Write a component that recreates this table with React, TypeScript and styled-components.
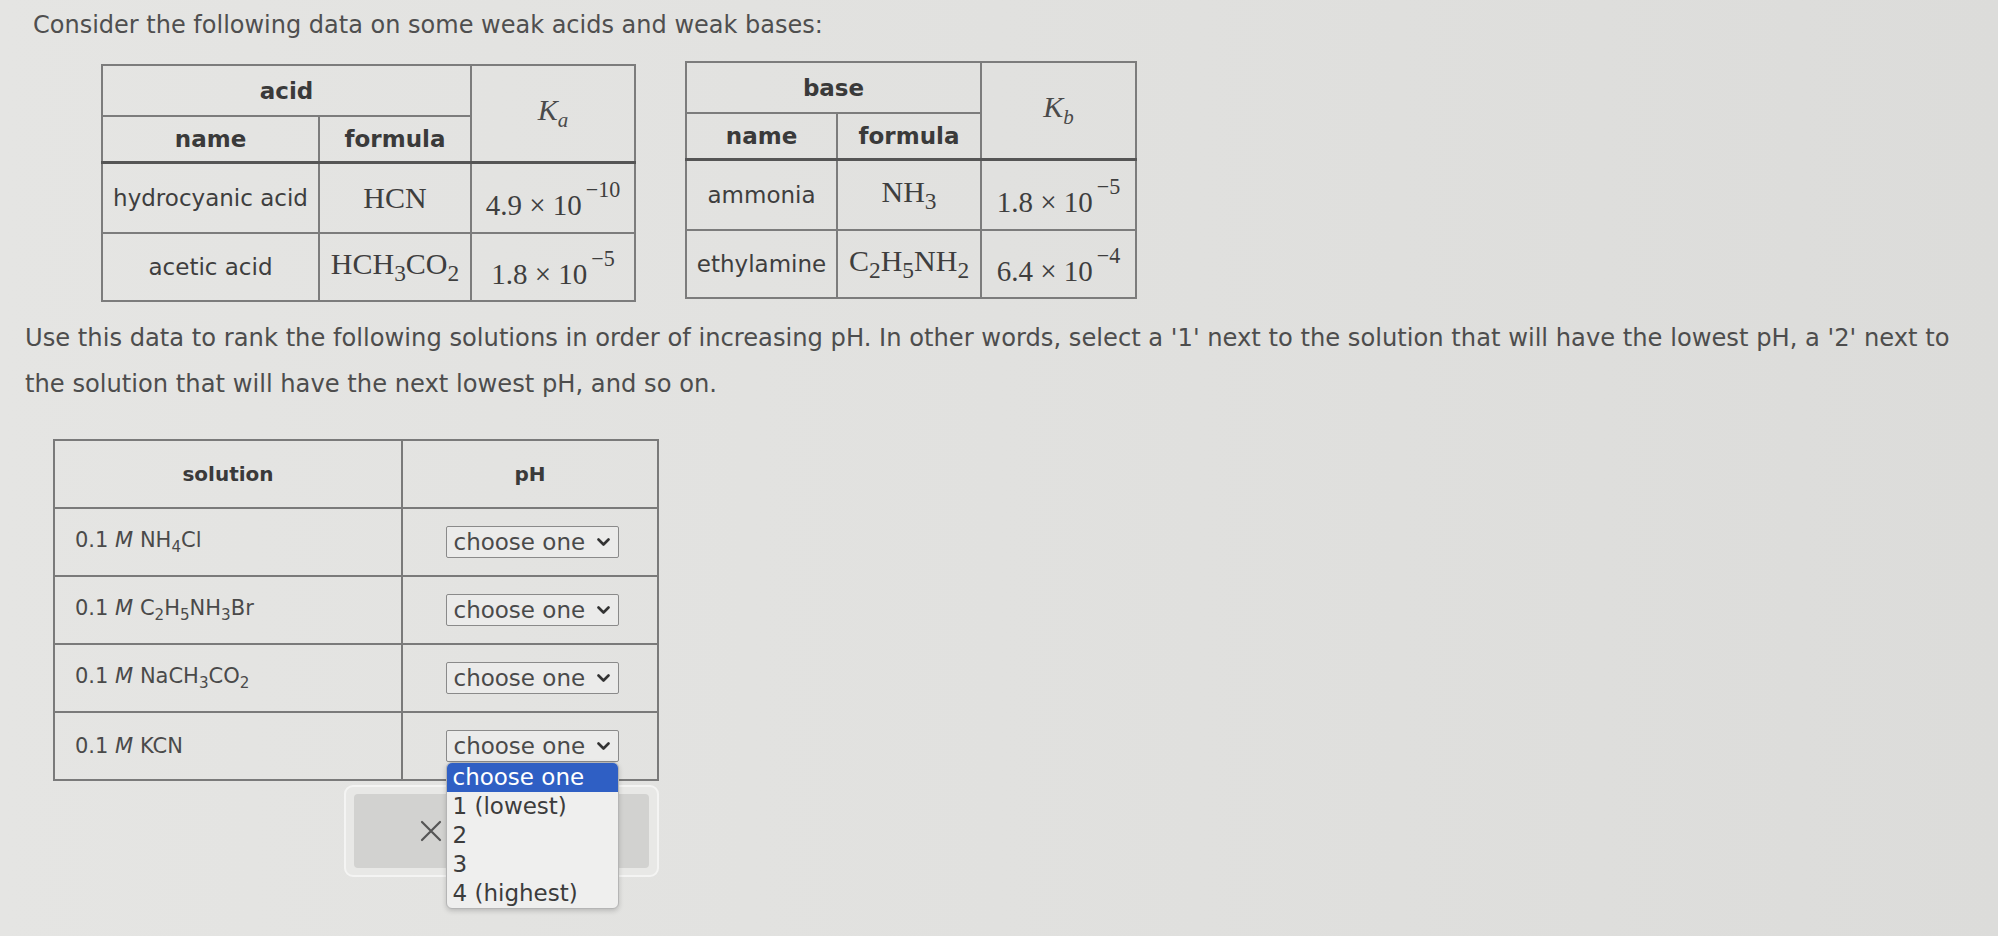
import React from "react";
import styled, { createGlobalStyle } from "styled-components";

const Global = createGlobalStyle`
  html, body { margin: 0; padding: 0; }
  body {
    width: 1998px;
    min-height: 936px;
    background: linear-gradient(90deg, #e5e5e3 0%, #e1e1df 50%, #dcdcda 100%);
    font-family: "DejaVu Sans", Verdana, sans-serif;
    color: #4a4a4a;
  }
`;

const Page = styled.div`
  padding-top: 11px;
  height: 925px;
  overflow: hidden;
`;

const Title = styled.div`
  margin-left: 33px;
  font-size: 24px;
  line-height: 28px;
  color: #4f4f4f;
`;

const TablesRow = styled.div`
  display: flex;
  align-items: flex-start;
  gap: 49px;
  margin-left: 101px;
  margin-top: 25px;
`;

const DataTable = styled.table`
  border-collapse: collapse;
  table-layout: fixed;
  color: #3e3e3e;
  td, th {
    border: 2px solid #7c7c7c;
    padding: 0;
    text-align: center;
    vertical-align: middle;
  }
`;

const HeadCell = styled.th<{ $h?: number; $thick?: boolean }>`
  height: ${(p) => p.$h ?? 44}px;
  font-family: "DejaVu Sans", Verdana, sans-serif;
  font-weight: bold;
  font-size: 23px;
  color: #3a3a3a;
  && { ${(p) => (p.$thick ? "border-bottom: 3px solid #555;" : "")} }
`;

const KCell = styled.th`
  font-family: "Liberation Serif", "DejaVu Serif", serif;
  font-weight: normal;
  font-style: italic;
  font-size: 30px;
  color: #4a4a4a;
  && { border-bottom: 3px solid #555; }
  sub {
    font-size: 0.7em;
    vertical-align: -0.35em;
  }
`;

const NameCell = styled.td<{ $h?: number }>`
  height: ${(p) => p.$h ?? 66}px;
  font-size: 23px;
  white-space: nowrap;
`;

const FormulaCell = styled.td`
  font-family: "Liberation Serif", "DejaVu Serif", serif;
  font-size: 30px;
  white-space: nowrap;
  sub {
    font-size: 0.78em;
    vertical-align: -0.3em;
  }
`;

const NumCell = styled.td`
  font-family: "Liberation Serif", "DejaVu Serif", serif;
  font-size: 29px;
  white-space: nowrap;
  padding-top: 2px !important;
  sup {
    font-size: 0.76em;
    vertical-align: 0.8em;
    margin-left: 4px;
  }
`;

const Para = styled.p`
  margin: 13px 0 0 25px;
  width: 1965px;
  font-size: 24.2px;
  line-height: 46px;
  color: #4d4d4d;
`;

const SolutionWrap = styled.div`
  margin-left: 55px;
  margin-top: 32px;
  width: 604px;
  display: flex;
  flex-direction: column;
  align-items: flex-end;
`;

const SolTable = styled.table`
  border-collapse: collapse;
  table-layout: fixed;
  width: 604px;
  td, th {
    border: 2px solid #7a7a7a;
    height: 66px;
    padding: 0;
  }
`;

const SolHead = styled.th`
  font-size: 20px;
  font-weight: bold;
  color: #3a3a3a;
  text-align: center;
`;

const SolCell = styled.td`
  font-size: 21px;
  color: #4a4a4a;
  padding-left: 20px !important;
  i { font-style: italic; }
  sub {
    font-size: 0.72em;
    vertical-align: -0.3em;
  }
`;

const SelCell = styled.td`
  text-align: center;
`;

const SelectWrap = styled.div`
  position: relative;
  display: inline-block;
  vertical-align: middle;
  margin-left: 4px;
`;

const SelectBox = styled.div`
  width: 173px;
  height: 32px;
  box-sizing: border-box;
  border: 1.5px solid #8a8a8a;
  border-radius: 2px;
  background: #ebebea;
  display: flex;
  align-items: center;
  justify-content: space-between;
  padding: 0 8px 0 7px;
  font-size: 23px;
  color: #4a4a4a;
  svg { flex: none; }
`;

const DropList = styled.div`
  position: absolute;
  top: 100%;
  left: 0;
  width: 173px;
  box-sizing: border-box;
  border: 1px solid #b5b5b5;
  border-radius: 6px;
  background: #efefee;
  overflow: hidden;
  box-shadow: 0 2px 5px rgba(0, 0, 0, 0.18);
  z-index: 5;
  text-align: left;
`;

const Option = styled.div<{ $active?: boolean }>`
  height: 29px;
  line-height: 29px;
  padding-left: 6px;
  font-size: 23px;
  color: ${(p) => (p.$active ? "#ffffff" : "#3c3c3c")};
  background: ${(p) => (p.$active ? "#2f5fc4" : "transparent")};
`;

const ButtonBox = styled.div`
  margin-top: 4px;
  width: 315px;
  height: 92px;
  box-sizing: border-box;
  border: 2px solid #f4f4f3;
  border-radius: 9px;
  padding: 7px 8px;
  background: #e8e8e6;
`;

const ButtonInner = styled.div`
  height: 100%;
  border-radius: 4px;
  background: #d2d2d0;
  display: flex;
  align-items: center;
  padding-left: 66px;
  color: #555;
`;

const Chevron = () => (
  <svg width="13" height="9" viewBox="0 0 13 9">
    <path d="M1.5 1.5 L6.5 6.5 L11.5 1.5" fill="none" stroke="#333" strokeWidth="2.6" strokeLinecap="round" strokeLinejoin="round" />
  </svg>
);

const Select = ({ open }: { open?: boolean }) => (
  <SelectWrap>
    <SelectBox>
      <span>choose one</span>
      <Chevron />
    </SelectBox>
    {open && (
      <DropList>
        <Option $active>choose one</Option>
        <Option>1 (lowest)</Option>
        <Option>2</Option>
        <Option>3</Option>
        <Option>4 (highest)</Option>
      </DropList>
    )}
  </SelectWrap>
);

export default function App() {
  return (
    <>
      <Global />
      <Page>
        <Title>Consider the following data on some weak acids and weak bases:</Title>
        <TablesRow>
          <DataTable style={{ width: 533 }}>
            <colgroup>
              <col style={{ width: 217 }} />
              <col style={{ width: 152 }} />
              <col style={{ width: 164 }} />
            </colgroup>
            <tbody>
              <tr>
                <HeadCell colSpan={2} $h={49}>acid</HeadCell>
                <KCell rowSpan={2}>
                  K<sub>a</sub>
                </KCell>
              </tr>
              <tr>
                <HeadCell $h={44} $thick>name</HeadCell>
                <HeadCell $h={44} $thick>formula</HeadCell>
              </tr>
              <tr>
                <NameCell $h={68}>hydrocyanic acid</NameCell>
                <FormulaCell>HCN</FormulaCell>
                <NumCell>
                  4.9 × 10<sup>−10</sup>
                </NumCell>
              </tr>
              <tr>
                <NameCell $h={66}>acetic acid</NameCell>
                <FormulaCell>
                  HCH<sub>3</sub>CO<sub>2</sub>
                </FormulaCell>
                <NumCell>
                  1.8 × 10<sup>−5</sup>
                </NumCell>
              </tr>
            </tbody>
          </DataTable>
          <DataTable style={{ width: 450, marginTop: -3 }}>
            <colgroup>
              <col style={{ width: 151 }} />
              <col style={{ width: 144 }} />
              <col style={{ width: 155 }} />
            </colgroup>
            <tbody>
              <tr>
                <HeadCell colSpan={2} $h={49}>base</HeadCell>
                <KCell rowSpan={2}>
                  K<sub>b</sub>
                </KCell>
              </tr>
              <tr>
                <HeadCell $h={44} $thick>name</HeadCell>
                <HeadCell $h={44} $thick>formula</HeadCell>
              </tr>
              <tr>
                <NameCell $h={68}>ammonia</NameCell>
                <FormulaCell>
                  NH<sub>3</sub>
                </FormulaCell>
                <NumCell>
                  1.8 × 10<sup>−5</sup>
                </NumCell>
              </tr>
              <tr>
                <NameCell $h={66}>ethylamine</NameCell>
                <FormulaCell>
                  C<sub>2</sub>H<sub>5</sub>NH<sub>2</sub>
                </FormulaCell>
                <NumCell>
                  6.4 × 10<sup>−4</sup>
                </NumCell>
              </tr>
            </tbody>
          </DataTable>
        </TablesRow>
        <Para>
          Use this data to rank the following solutions in order of increasing pH. In other words, select a '1' next to the
          solution that will have the lowest pH, a '2' next to the solution that will have the next lowest pH, and so on.
        </Para>
        <SolutionWrap>
          <SolTable>
            <colgroup>
              <col style={{ width: 348 }} />
              <col style={{ width: 256 }} />
            </colgroup>
            <tbody>
              <tr>
                <SolHead>solution</SolHead>
                <SolHead>pH</SolHead>
              </tr>
              <tr>
                <SolCell>
                  0.1 <i>M</i> NH<sub>4</sub>Cl
                </SolCell>
                <SelCell>
                  <Select />
                </SelCell>
              </tr>
              <tr>
                <SolCell>
                  0.1 <i>M</i> C<sub>2</sub>H<sub>5</sub>NH<sub>3</sub>Br
                </SolCell>
                <SelCell>
                  <Select />
                </SelCell>
              </tr>
              <tr>
                <SolCell>
                  0.1 <i>M</i> NaCH<sub>3</sub>CO<sub>2</sub>
                </SolCell>
                <SelCell>
                  <Select />
                </SelCell>
              </tr>
              <tr>
                <SolCell>
                  0.1 <i>M</i> KCN
                </SolCell>
                <SelCell>
                  <Select open />
                </SelCell>
              </tr>
            </tbody>
          </SolTable>
          <ButtonBox>
            <ButtonInner>
              <svg width="22" height="22" viewBox="0 0 22 22">
                <path d="M2 2 L20 20 M20 2 L2 20" stroke="#555" strokeWidth="2.2" strokeLinecap="round" />
              </svg>
            </ButtonInner>
          </ButtonBox>
        </SolutionWrap>
      </Page>
    </>
  );
}
